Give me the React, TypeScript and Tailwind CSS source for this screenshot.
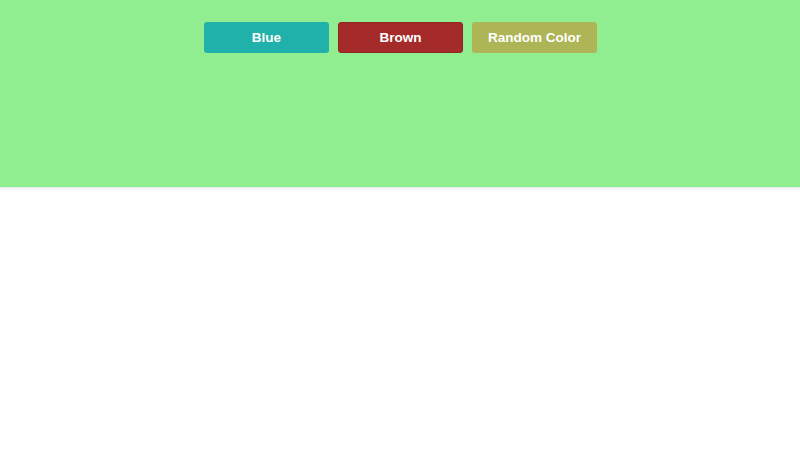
import { useState } from 'react'

const randomHex = () =>
  '#' + Math.floor(Math.random() * 0xffffff).toString(16).padStart(6, '0')

export default function App() {
  const [bg, setBg] = useState('#90ee90')
  const [randomColor] = useState('#adb556')

  return (
    <div className="min-h-screen bg-white font-['Liberation_Sans',Arial,sans-serif]">
      <header
        className="h-[187px] pt-[22px] shadow-[0_1px_3px_rgba(0,0,0,0.12)]"
        style={{ backgroundColor: bg }}
      >
        <div className="flex justify-center gap-[9px] pl-px">
          <button
            onClick={() => setBg('#20b2aa')}
            className="w-[125px] h-[31px] pt-[2px] rounded-[3px] bg-[#20b2aa] text-white text-[13.5px] font-bold"
          >
            Blue
          </button>
          <button
            onClick={() => setBg('#a52a2a')}
            className="w-[125px] h-[31px] pt-[2px] rounded-[3px] bg-[#a52a2a] border border-[#8e2424] text-white text-[13.5px] font-bold"
          >
            Brown
          </button>
          <button
            onClick={() => setBg(randomHex())}
            className="w-[125px] h-[31px] pt-[2px] rounded-[3px] text-white text-[13.5px] font-bold"
            style={{ backgroundColor: randomColor }}
          >
            Random Color
          </button>
        </div>
      </header>
    </div>
  )
}
